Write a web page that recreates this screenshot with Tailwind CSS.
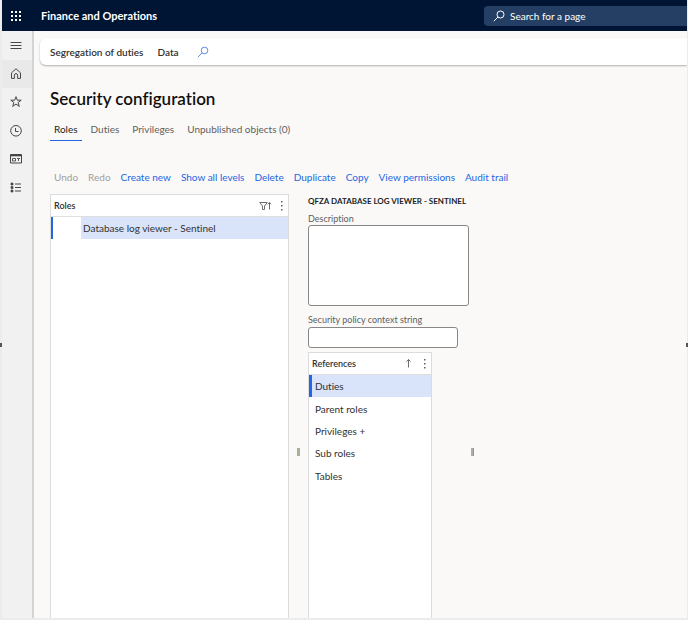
<!DOCTYPE html>
<html lang="en">

<head>
  <meta charset="UTF-8">
  <meta name="viewport" content="width=device-width, initial-scale=1.0">
  <title>Security configuration</title>
  <script src="https://cdn.jsdelivr.net/npm/@tailwindcss/browser@4"></script>
</head>

<body class="bg-[#ececec] font-['Lato',sans-serif] text-[10px] leading-4 text-[#323130] [font-variant-ligatures:none]">
  <div class="relative flex h-screen flex-col overflow-hidden border-r border-b-2 border-l-2 border-[#ececec] bg-[#faf9f8]">
    <!-- top bar -->
    <header class="flex h-[31px] shrink-0 items-center bg-[#001433] text-white">
      <button type="button" aria-label="Apps" class="flex w-7 justify-center">
        <svg class="size-3" viewBox="0 0 12 12" fill="currentColor">
          <path d="M1 1h2v2H1zM5 1h2v2H5zM9 1h2v2H9zM1 5h2v2H1zM5 5h2v2H5zM9 5h2v2H9zM1 9h2v2H1zM5 9h2v2H5zM9 9h2v2H9z" />
        </svg>
      </button>
      <a href="#" class="ml-[11px] text-[11px] font-bold">Finance and Operations</a>
      <label class="ml-auto flex h-5 w-[203px] items-center gap-1 rounded-l-sm bg-[#243f63] pl-[9px]">
        <svg class="size-3 shrink-0" viewBox="0 0 12 12" fill="none" stroke="currentColor">
          <circle cx="7.5" cy="4.5" r="3.5" />
          <path d="M5 7 .8 11.2" />
        </svg>
        <input type="text" aria-label="Search" placeholder="Search for a page" class="w-full bg-transparent pl-[1px] text-[10px] outline-none placeholder:text-white">
      </label>
    </header>

    <div class="flex min-h-0 grow">
      <!-- side navigation -->
      <nav class="w-8 shrink-0 border-r-2 border-[#d4d4d4] bg-[#f1f1f1] pr-0.5 text-[#484644]">
        <div class="grid h-[171px] grid-rows-6">
          <button type="button" aria-label="Menu" class="flex items-center justify-center">
            <svg class="size-3" viewBox="0 0 12 12" fill="none" stroke="currentColor"><path d="M.5 3.500h11M.5 6.500h11M.5 9.500h11" /></svg>
          </button>
          <a href="#" aria-label="Home" class="-mr-0.5 flex items-center justify-center bg-[#e9e9e9] pr-0.5">
            <svg class="size-3" viewBox="0 0 12 12" fill="none" stroke="currentColor" stroke-linejoin="round"><path d="M1.500 4.800 6 .8l4.500 4v5.600H7.600V7.200a1.600 1.600 0 0 0-3.200 0v3.200H1.500z" /></svg>
          </a>
          <a href="#" aria-label="Favorites" class="flex items-center justify-center">
            <svg class="size-3" viewBox="0 0 12 12" fill="none" stroke="currentColor" stroke-linejoin="round"><path d="m6 .7 1.300 3.500h3.900L8.100 6.500l1.200 3.900L6 8.100l-3.300 2.300 1.200-3.900L.8 4.200h3.900z" /></svg>
          </a>
          <a href="#" aria-label="Recent" class="flex items-center justify-center">
            <svg class="size-3" viewBox="0 0 12 12" fill="none" stroke="currentColor"><circle cx="6" cy="5.800" r="5.300" /><path d="M5.500 3v3.500H8.500" /></svg>
          </a>
          <a href="#" aria-label="Workspaces" class="flex items-center justify-center">
            <svg class="size-3" viewBox="0 0 12 12" fill="none" stroke="currentColor"><path d="M.5 1.500h11v8.500H.5z" /><path d="M.5 2.500h11" stroke-width="1.600" /><path d="M2.500 5.500h3v2.500h-3zM7 5.500h3M8.500 5.500v2.500" stroke-width=".9" /></svg>
          </a>
          <a href="#" aria-label="Modules" class="flex items-center justify-center">
            <svg class="size-3" viewBox="0 0 12 12" fill="none" stroke="currentColor"><path d="M1 1h2v2H1zM1 4.500h2v2H1zM1 8h2v2H1z" fill="currentColor" stroke-width=".7" /><path d="M5 2h6M5 5.500h6M5 9h6" /></svg>
          </a>
        </div>
      </nav>

      <main class="flex min-w-0 grow flex-col pt-[7px]">
        <div class="ml-1.5 flex h-[27px] shrink-0 items-center gap-[14px] rounded-l-md bg-white pl-2.5 font-semibold shadow-[0_1px_2px_rgba(0,0,0,0.3)]">
          <button type="button">Segregation of duties</button>
          <button type="button">Data</button>
          <button type="button" aria-label="Find" class="ml-1 text-[#5b8def]">
            <svg class="size-3" viewBox="0 0 12 12" fill="none" stroke="currentColor"><circle cx="7.500" cy="4.500" r="3.300" /><path d="M5 7 .8 11.200" /></svg>
          </button>
        </div>

        <div class="flex min-h-0 grow flex-col pl-4">
          <h1 class="mt-[22px] text-[17px] leading-6 font-semibold text-[#11100f]">Security configuration</h1>

          <div role="tablist" class="mt-[10px] flex gap-[13px] text-[#605e5c]">
            <button type="button" role="tab" aria-selected="true" class="-mr-1 border-b border-[#2266e3] px-1 pb-[3px] text-[#201f1e]">Roles</button>
            <button type="button" role="tab" class="pb-1">Duties</button>
            <button type="button" role="tab" class="pb-1">Privileges</button>
            <button type="button" role="tab" class="pb-1">Unpublished objects (0)</button>
          </div>

          <div class="mt-7 ml-1 flex gap-2.5 whitespace-nowrap text-[#2266e3]">
            <button type="button" disabled class="text-[#a19f9d]">Undo</button>
            <button type="button" disabled class="text-[#a19f9d]">Redo</button>
            <button type="button">Create new</button>
            <button type="button">Show all levels</button>
            <button type="button">Delete</button>
            <button type="button">Duplicate</button>
            <button type="button">Copy</button>
            <button type="button">View permissions</button>
            <button type="button">Audit trail</button>
          </div>

          <div class="mt-[9px] flex min-h-0 grow">
            <!-- roles -->
            <section class="w-[239px] border border-b-0 border-[#dcdcdc] bg-white">
              <div class="flex h-[22px] items-center border-b border-[#e1dfdd] pr-1 pl-[3px] text-[#605e5c]">
                <h2 class="grow text-[9px] font-semibold text-[#323130]">Roles</h2>
                <button type="button" aria-label="Filter and sort" class="mr-2">
                  <svg class="h-3 w-[13px]" viewBox="0 0 13 12" fill="none" stroke="currentColor" stroke-width=".9"><path d="M.7 2.500h7.600L5.500 6v3.500h-2V6zM10.500 9.500v-7M8.800 4.200l1.700-1.700 1.700 1.700" /></svg>
                </button>
                <button type="button" aria-label="More">
                  <svg class="h-3 w-1" viewBox="0 0 4 12" fill="currentColor"><path d="M1 1h1.500v1.500H1zM1 5h1.500v1.500H1zM1 9h1.500v1.500H1z" /></svg>
                </button>
              </div>
              <ul>
                <li class="flex h-[22px] border-l-2 border-[#2266e3] pl-7">
                  <button type="button" class="grow bg-[#d9e4fb] pl-0.5 text-left">Database log viewer - Sentinel</button>
                </li>
              </ul>
            </section>

            <div role="separator" class="flex w-[19px] items-center justify-center pt-[91px]">
              <span class="h-2 w-[3px] border-l border-[#d9a648] bg-[#a9b39c]"></span>
            </div>

            <!-- role details -->
            <section class="flex w-[161px] flex-col">
              <h2 class="text-[8px] leading-[14px] font-bold whitespace-nowrap text-[#201f1e]">QFZA DATABASE LOG VIEWER - SENTINEL</h2>
              <label for="description" class="mt-1 text-[9px] leading-[13px] text-[#605e5c]">Description</label>
              <textarea id="description" class="h-[81px] shrink-0 resize-none rounded-[3px] border border-[#8a8886] bg-white p-1"></textarea>
              <label for="context" class="mt-[7px] text-[9px] leading-[13px] text-[#605e5c]">Security policy context string</label>
              <input id="context" type="text" class="mt-px h-[21px] w-[150px] shrink-0 rounded-[3px] border border-[#8a8886] bg-white px-1">

              <div class="mt-1 w-[124px] grow border border-b-0 border-[#dcdcdc] bg-white">
                <div class="flex h-[22px] items-center border-b border-[#e1dfdd] pr-1 pl-[3px] text-[#605e5c]">
                  <h3 class="grow text-[9px] font-semibold text-[#323130]">References</h3>
                  <button type="button" aria-label="Sort" class="mr-2">
                    <svg class="size-3" viewBox="0 0 12 12" fill="none" stroke="currentColor" stroke-width=".9"><path d="M5.500 9.500v-8M3.500 3.500l2-2 2 2" /></svg>
                  </button>
                  <button type="button" aria-label="More">
                    <svg class="h-3 w-1" viewBox="0 0 4 12" fill="currentColor"><path d="M1 1h1.500v1.500H1zM1 5h1.500v1.500H1zM1 9h1.500v1.500H1z" /></svg>
                  </button>
                </div>
                <ul class="grid h-28 grid-rows-5">
                  <li class="flex border-l-[3px] border-[#2266e3] bg-[#d9e4fb]"><button type="button" class="grow pl-[3px] text-left">Duties</button></li>
                  <li class="flex"><button type="button" class="grow pl-1.5 text-left">Parent roles</button></li>
                  <li class="flex"><button type="button" class="grow pl-1.5 text-left">Privileges +</button></li>
                  <li class="flex"><button type="button" class="grow pl-1.5 text-left">Sub roles</button></li>
                  <li class="flex"><button type="button" class="grow pl-1.5 text-left">Tables</button></li>
                </ul>
              </div>
            </section>

            <div role="separator" class="flex w-[7px] items-center justify-center pt-[91px]">
              <span class="h-2 w-[3px] border-r border-[#8f8ec0] bg-[#b0aea6]"></span>
            </div>
          </div>
        </div>
      </main>
    </div>
  </div>
  <!-- window resize grips -->
  <span class="absolute top-[343px] left-0 h-1 w-0.5 bg-[#555]"></span>
  <span class="absolute top-[343px] right-0 h-1 w-0.5 bg-[#555]"></span>
</body>

</html>
